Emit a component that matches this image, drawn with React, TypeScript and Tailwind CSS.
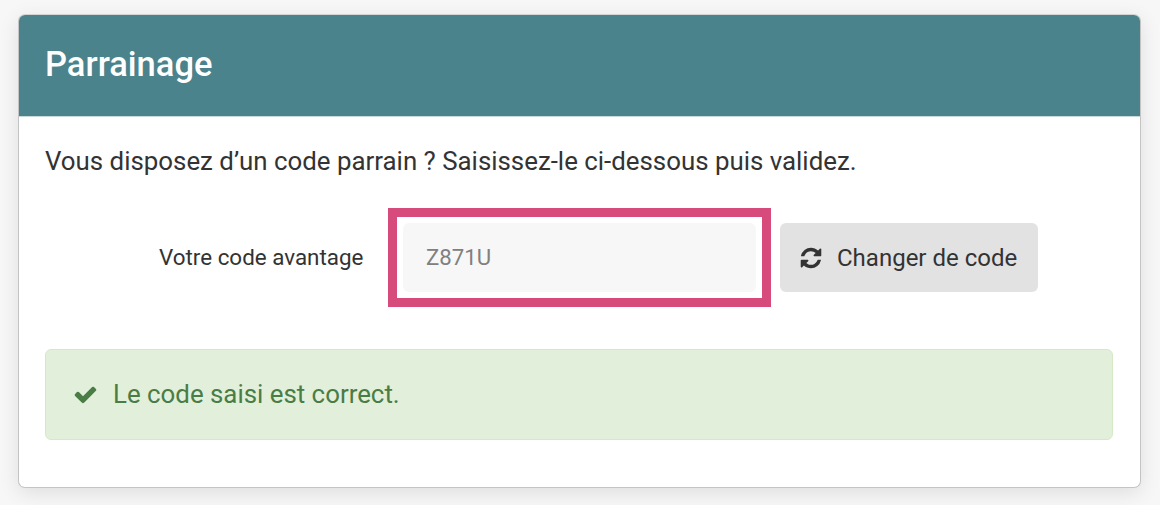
import React from 'react';

const App = () => {
  return (
    <div className="h-[505px] overflow-hidden bg-[#f7f7f7] pl-[18px] pr-[19px] pt-[14px] font-['Roboto',sans-serif] text-[#333333]">
      <div className="h-[474px] overflow-hidden rounded-[7px] border border-[#c4c4c4] border-t-[#d4d4d4] bg-white shadow-[0_5px_20px_rgba(0,0,0,0.1)]">
        <div className="flex h-[102px] items-center border-b border-[#c8d9db] bg-[#4a838c] pl-[26px] pb-[2px]">
          <h1 className="text-[34.5px] font-medium text-white">Parrainage</h1>
        </div>
        <div className="pl-[26px] pr-[27px] pt-[29px]">
          <p className="text-[25.85px] leading-[30px]">
            Vous disposez d’un code parrain ? Saisissez-le ci-dessous puis validez.
          </p>
          <div className="mt-[32px] flex items-center">
            <label className="ml-[114px] w-[229px] text-[22.4px]">Votre code avantage</label>
            <div className="h-[99px] w-[383px] border-[9px] border-[#d64a7c] bg-white p-[6px]">
              <div className="flex h-full items-center rounded-[6px] bg-[#f7f7f7] px-[23px] text-[22.2px] text-[#808080]">
                Z871U
              </div>
            </div>
            <button
              type="button"
              className="ml-[9px] flex h-[69px] w-[258px] items-center gap-[14px] rounded-[6px] bg-[#e2e2e2] pl-[19px] text-[24px]"
            >
              <svg viewBox="0 0 1792 1792" fill="currentColor" className="h-[24px] w-[24px]">
                <path d="M1639 1056q0 5-1 7-64 268-268 434.500t-478 166.500q-146 0-282.500-55t-243.500-157l-129 129q-19 19-45 19t-45-19-19-45v-448q0-26 19-45t45-19h448q26 0 45 19t19 45-19 45l-137 137q71 66 161 102t187 36q134 0 250-65t186-179q11-17 53-117 8-23 30-23h192q13 0 22.500 9.500t9.500 22.500zm25-800v448q0 26-19 45t-45 19h-448q-26 0-45-19t-19-45 19-45l138-138q-148-137-349-137-134 0-250 65t-186 179q-11 17-53 117-8 23-30 23h-199q-13 0-22.500-9.500t-9.500-22.500v-7q65-268 270-434.500t480-166.500q146 0 284 55.500t245 156.500l130-129q19-19 45-19t45 19 19 45z" />
              </svg>
              Changer de code
            </button>
          </div>
          <div className="mt-[42px] flex h-[91px] items-center gap-[15px] rounded-[6px] border border-[#d6e9c6] bg-[#e2efda] px-[27px] text-[25.85px] text-[#4a7c45]">
            <svg viewBox="0 0 1792 1792" fill="currentColor" className="h-[25px] w-[25px]">
              <path d="M1671 566q0 40-28 68l-724 724-136 136q-28 28-68 28t-68-28l-136-136-362-362q-28-28-28-68t28-68l136-136q28-28 68-28t68 28l294 295 656-657q28-28 68-28t68 28l136 136q28 28 28 68z" />
            </svg>
            Le code saisi est correct.
          </div>
        </div>
      </div>
    </div>
  );
};

export default App;
